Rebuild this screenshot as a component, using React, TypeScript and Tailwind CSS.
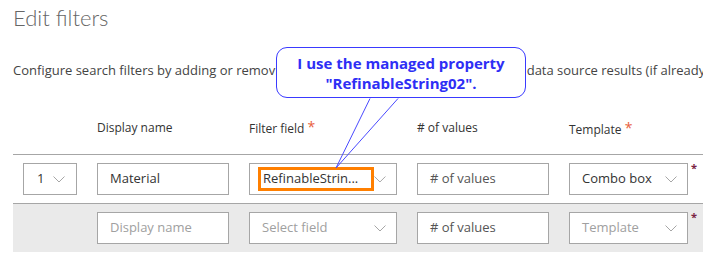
import React from "react";

const Chevron = ({ className = "" }: { className?: string }) => (
  <svg width="12" height="7" viewBox="0 0 12 7" className={className} fill="none">
    <path d="M0.5 0.5 L6 6 L11.5 0.5" stroke="#a6a6a6" strokeWidth="1" />
  </svg>
);

const Box = ({
  w,
  children,
  chevron,
  className = "",
}: {
  w: string;
  children?: React.ReactNode;
  chevron?: boolean;
  className?: string;
}) => (
  <div
    className={`${w} h-[32px] border border-[#a6a6a6] bg-white flex items-center justify-between pl-[12px] pr-[10px] text-[13px] ${className}`}
  >
    <span className="whitespace-nowrap">{children}</span>
    {chevron && <Chevron />}
  </div>
);

export default function App() {
  return (
    <div
      className="relative w-[703px] h-[274px] bg-white overflow-hidden text-[#333333]"
      style={{ fontFamily: '"Open Sans", "Noto Sans", sans-serif' }}
    >
      <div className="pl-[13px] pt-[4px]">
        <h1
          className="text-[22px] font-light text-[#666666] leading-[28px]"
          style={{ fontFamily: 'Lato, "Open Sans", sans-serif' }}
        >
          Edit filters
        </h1>
        <p className="mt-[29px] text-[13px] leading-[18px] whitespace-nowrap text-[#444444]">
          Configure search filters by adding or remo
          <span className="inline-block w-[258px] overflow-hidden align-bottom">ving rows. You can select fields from the</span>
          data source results (if already selected)
        </p>
      </div>

      <div className="mt-[33px] ml-[13px]">
        <div className="grid grid-cols-[54px_132px_148px_132px_119px_auto] gap-x-[20px] pl-[10px] h-[42px] text-[12px] text-[#333333]">
          <div />
          <div className="pt-[7px]">Display name</div>
          <div className="pt-[8px]">
            Filter field <span className="text-[#e8603c] text-[14px] align-top leading-none">*</span>
          </div>
          <div className="pt-[7px]"># of values</div>
          <div className="pt-[9px]">
            Template <span className="text-[#e8603c] text-[14px] align-top leading-none">*</span>
          </div>
          <div />
        </div>

        <div className="border-t border-[#a6a6a6]">
          <div className="grid grid-cols-[54px_132px_148px_132px_119px_auto] gap-x-[20px] pl-[10px] py-[8px] items-start">
            <Box w="w-[54px]" chevron className="pl-[13px] pr-[11px]">1</Box>
            <Box w="w-[132px]">Material</Box>
            <div className="relative w-[148px] h-[32px] border border-[#a6a6a6] bg-white flex items-center justify-between pl-[8px] pr-[10px] text-[13px]">
              <span className="w-[117px] h-[24px] border-[3px] border-[#ff7f00] flex items-center pl-[2px] whitespace-nowrap">
                RefinableStrin...
              </span>
              <Chevron />
            </div>
            <Box w="w-[132px]">
              <span className="text-[#555555]"># of values</span>
            </Box>
            <Box w="w-[119px]" chevron>Combo box</Box>
            <span className="text-[#7a2444] text-[11px] leading-none -ml-[17px] -mt-[1px] font-bold">*</span>
          </div>
        </div>

        <div className="border-t border-[#a6a6a6] bg-[#eaeaea]">
          <div className="grid grid-cols-[54px_132px_148px_132px_119px_auto] gap-x-[20px] pl-[10px] py-[8px] items-start">
            <div />
            <Box w="w-[132px]">
              <span className="text-[#a0a0a0]">Display name</span>
            </Box>
            <Box w="w-[148px]" chevron>
              <span className="text-[#a0a0a0]">Select field</span>
            </Box>
            <Box w="w-[132px]">
              <span className="text-[#555555]"># of values</span>
            </Box>
            <Box w="w-[119px]" chevron>
              <span className="text-[#a0a0a0]">Template</span>
            </Box>
            <span className="text-[#7a2444] text-[11px] leading-none -ml-[17px] -mt-[1px] font-bold">*</span>
          </div>
        </div>
      </div>

      {/* Callout */}
      <div className="absolute left-[276px] top-[47px] w-[250px] h-[51px] rounded-[11px] border-[1.5px] border-[#3a3aff] bg-white flex flex-col items-center justify-center text-[15px] font-bold leading-[20px] text-[#2e2ef5]">
        <div>I use the managed property</div>
        <div>"RefinableString02".</div>
      </div>
      <svg className="absolute left-0 top-0 pointer-events-none" width="703" height="274">
        <line x1="370" y1="98.5" x2="336" y2="168" stroke="#4a4aff" strokeWidth="1" />
        <line x1="398" y1="98.5" x2="336" y2="168" stroke="#4a4aff" strokeWidth="1" />
      </svg>
    </div>
  );
}
